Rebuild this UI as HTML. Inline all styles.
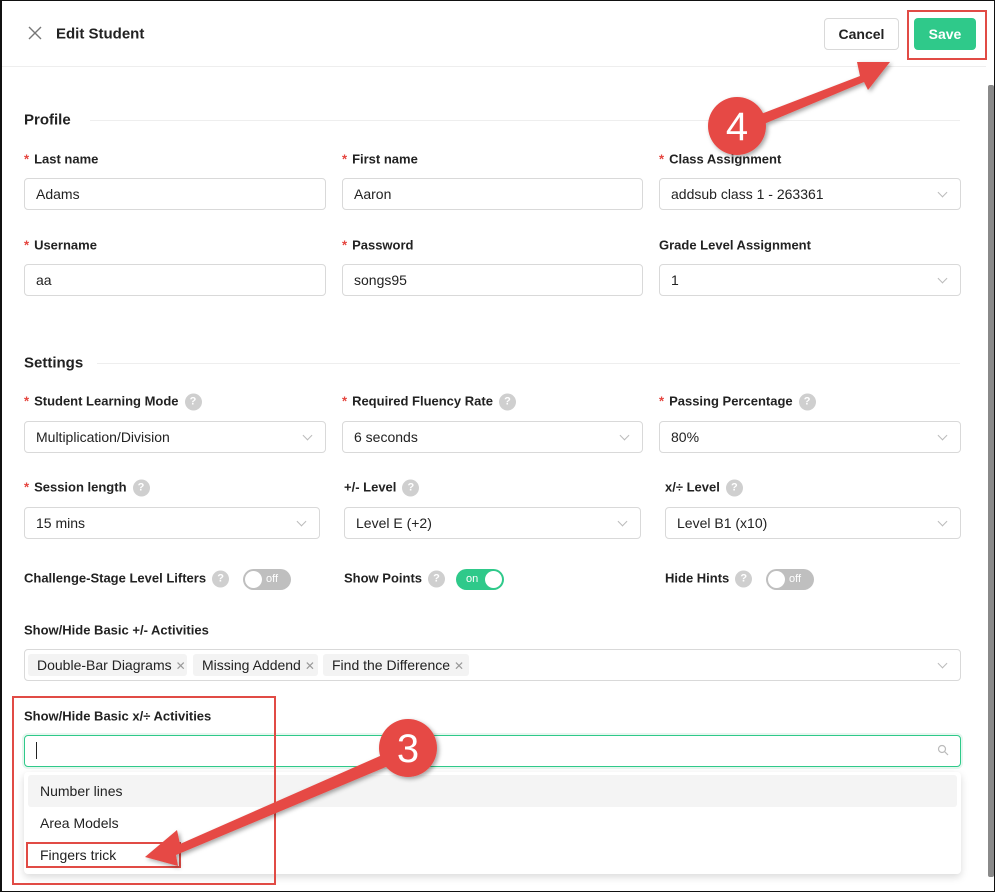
<!DOCTYPE html>
<html><head><meta charset="utf-8"><style>
*{box-sizing:border-box;margin:0;padding:0}
body{width:995px;height:892px;overflow:hidden;background:#fff;font-family:"Liberation Sans",sans-serif;color:#222;position:relative}
.a{position:absolute}
.frame{position:absolute;left:0;top:0;width:995px;height:892px;border:1px solid #111;pointer-events:none;border-left-width:2px}
.lbl{position:absolute;font-size:13px;font-weight:bold;color:#222;white-space:nowrap;transform:translateY(-50%)}
.lbl .s{color:#e5453f;margin-right:5px}
.q{display:inline-block;width:17px;height:17px;border-radius:50%;background:#cfcfcf;color:#fff;font-size:11px;text-align:center;line-height:17px;margin-left:6px;vertical-align:middle}
.in{position:absolute;height:32px;border:1px solid #d9d9d9;border-radius:4px;font-size:14px;padding-left:11px;line-height:30px;color:#222}
.in.sel::after{content:"";position:absolute;right:14px;top:10px;width:6px;height:6px;border-right:1px solid #bbb;border-bottom:1px solid #bbb;transform:rotate(45deg)}
.sec{position:absolute;font-size:15px;font-weight:bold;transform:translateY(-50%)}
.hr{position:absolute;height:1px;background:#eee}
.tg{position:absolute;width:48px;height:21px;border-radius:11px;background:#bfbfbf;color:#fff;font-size:11px;line-height:21px}
.tg i{position:absolute;top:2px;width:17px;height:17px;border-radius:50%;background:#fff}
.tag{position:absolute;top:654px;height:22px;background:#f3f3f3;border-radius:3px;font-size:14px;line-height:22px;padding-left:9px;color:#222}
.tag b{font-weight:normal;color:#999;margin-left:4px;font-size:12px}
.it{position:absolute;left:40px;font-size:14px;transform:translateY(-50%)}
</style></head><body>
<div class="a" style="left:28px;top:26px;font-size:20px;color:#777;line-height:16px">
<svg width="14" height="14"><path d="M1 1L13 13M13 1L1 13" stroke="#777" stroke-width="1.4"/></svg></div>
<div class="sec" style="left:56px;top:34px">Edit Student</div>
<div class="a" style="left:824px;top:18px;width:75px;height:32px;border:1px solid #d9d9d9;border-radius:4px;font-size:14px;font-weight:bold;text-align:center;line-height:30px">Cancel</div>
<div class="a" style="left:914px;top:18px;width:62px;height:32px;background:#2fc98a;border-radius:4px;color:#fff;font-size:14px;font-weight:bold;text-align:center;line-height:32px">Save</div>
<div class="a" style="left:907px;top:10px;width:80px;height:50px;border:2px solid #e14b45"></div>
<div class="hr" style="left:2px;top:66px;width:984px"></div>

<div class="sec" style="left:24px;top:120px">Profile</div>
<div class="hr" style="left:90px;top:120px;width:870px"></div>
<div class="lbl" style="left:24px;top:159px"><span class="s">*</span>Last name</div>
<div class="lbl" style="left:342px;top:159px"><span class="s">*</span>First name</div>
<div class="lbl" style="left:659px;top:159px"><span class="s">*</span>Class Assignment</div>
<div class="in" style="left:24px;top:178px;width:302px">Adams</div>
<div class="in" style="left:342px;top:178px;width:301px">Aaron</div>
<div class="in sel" style="left:659px;top:178px;width:302px">addsub class 1 - 263361</div>
<div class="lbl" style="left:24px;top:245px"><span class="s">*</span>Username</div>
<div class="lbl" style="left:342px;top:245px"><span class="s">*</span>Password</div>
<div class="lbl" style="left:659px;top:245px">Grade Level Assignment</div>
<div class="in" style="left:24px;top:264px;width:302px">aa</div>
<div class="in" style="left:342px;top:264px;width:301px">songs95</div>
<div class="in sel" style="left:659px;top:264px;width:302px">1</div>

<div class="sec" style="left:24px;top:363px">Settings</div>
<div class="hr" style="left:97px;top:363px;width:863px"></div>
<div class="lbl" style="left:24px;top:402px"><span class="s">*</span>Student Learning Mode<span class="q">?</span></div>
<div class="lbl" style="left:342px;top:402px"><span class="s">*</span>Required Fluency Rate<span class="q">?</span></div>
<div class="lbl" style="left:659px;top:402px"><span class="s">*</span>Passing Percentage<span class="q">?</span></div>
<div class="in sel" style="left:24px;top:421px;width:302px">Multiplication/Division</div>
<div class="in sel" style="left:342px;top:421px;width:301px">6 seconds</div>
<div class="in sel" style="left:659px;top:421px;width:302px">80%</div>
<div class="lbl" style="left:24px;top:488px"><span class="s">*</span>Session length<span class="q">?</span></div>
<div class="lbl" style="left:344px;top:488px">+/- Level<span class="q">?</span></div>
<div class="lbl" style="left:665px;top:488px">x/÷ Level<span class="q">?</span></div>
<div class="in sel" style="left:24px;top:507px;width:296px">15 mins</div>
<div class="in sel" style="left:344px;top:507px;width:297px">Level E (+2)</div>
<div class="in sel" style="left:665px;top:507px;width:296px">Level B1 (x10)</div>

<div class="lbl" style="left:24px;top:579px">Challenge-Stage Level Lifters<span class="q">?</span></div>
<div class="tg" style="left:243px;top:569px"><i style="left:2px"></i><span style="position:absolute;left:23px">off</span></div>
<div class="lbl" style="left:344px;top:579px">Show Points<span class="q">?</span></div>
<div class="tg" style="left:456px;top:569px;background:#2fc98a"><span style="position:absolute;left:10px">on</span><i style="right:2px"></i></div>
<div class="lbl" style="left:665px;top:579px">Hide Hints<span class="q">?</span></div>
<div class="tg" style="left:766px;top:569px"><i style="left:2px"></i><span style="position:absolute;left:23px">off</span></div>

<div class="lbl" style="left:24px;top:630px">Show/Hide Basic +/- Activities</div>
<div class="in sel" style="left:24px;top:649px;width:937px"></div>
<div class="tag" style="left:28px;width:159px">Double-Bar Diagrams<b>✕</b></div>
<div class="tag" style="left:193px;width:125px">Missing Addend<b>✕</b></div>
<div class="tag" style="left:323px;width:146px">Find the Difference<b>✕</b></div>

<div class="lbl" style="left:24px;top:716px">Show/Hide Basic x/÷ Activities</div>
<div class="in" style="left:24px;top:735px;width:937px;border-color:#2fc98a;box-shadow:0 0 0 2px #e6f7ef"></div>
<div class="a" style="left:36px;top:742px;width:1px;height:17px;background:#222"></div>
<svg class="a" style="left:937px;top:744px" width="12" height="12"><circle cx="5" cy="5" r="3.5" fill="none" stroke="#bbb" stroke-width="1.2"/><path d="M7.5 7.5L11 11" stroke="#bbb" stroke-width="1.2"/></svg>
<div class="a" style="left:24px;top:772px;width:937px;height:102px;border-radius:4px;background:#fff;box-shadow:0 3px 8px rgba(0,0,0,.15)"></div>
<div class="a" style="left:28px;top:775px;width:929px;height:32px;background:#f4f4f4;border-radius:3px"></div>
<div class="it" style="top:791px">Number lines</div>
<div class="it" style="top:823px">Area Models</div>
<div class="it" style="top:855px">Fingers trick</div>
<div class="a" style="left:26px;top:842px;width:155px;height:26px;border:2px solid #e14b45"></div>
<div class="a" style="left:12px;top:696px;width:264px;height:189px;border:2px solid #e14b45"></div>

<div class="a" style="left:988px;top:85px;width:6px;height:792px;background:#8a8a8a;border-radius:2px"></div>

<svg class="a" style="left:0;top:0" width="995" height="892">
<defs><filter id="sh"><feDropShadow dx="2" dy="2" stdDeviation="2" flood-opacity=".35"/></filter></defs>
<g filter="url(#sh)" fill="#e64a45">
<path d="M735 124L860 76L857 62L890 62L868 90L864 82L740 134Z"/>
<circle cx="737" cy="126" r="29"/>
<path d="M405 745L180 844L177 830L145 857L178 866L176 855L412 756Z"/>
<circle cx="408" cy="748" r="29"/>
</g>
<text x="737" y="140" fill="#fff" font-family="Liberation Sans" font-size="40" text-anchor="middle">4</text>
<text x="408" y="762" fill="#fff" font-family="Liberation Sans" font-size="40" text-anchor="middle">3</text>
</svg>
<div class="frame"></div>
</body></html>
